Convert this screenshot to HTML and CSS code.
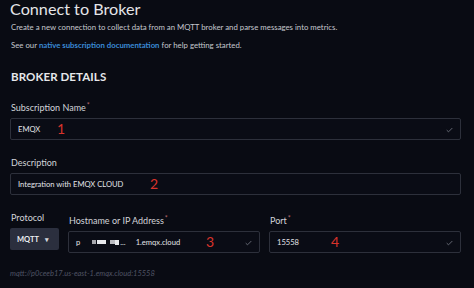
FILE: index.html
```html
<!DOCTYPE html>
<html>
<head>
<meta charset="utf-8">
<link rel="stylesheet" href="styles.css">
</head>
<body>
<div class="page">
  <h1 class="title">Connect to Broker</h1>
  <p class="intro">Create a new connection to collect data from an MQTT broker and parse messages into metrics.</p>
  <p class="intro second">See our <a class="link">native subscription documentation</a> for help getting started.</p>
  <h2 class="section">BROKER DETAILS</h2>

  <div class="field">
    <div class="label">Subscription Name<span class="req">*</span></div>
    <div class="input">
      <span class="value">EMQX</span>
      <span class="num n1">1</span>
      <svg class="check" viewBox="0 0 10 8"><path d="M1 4.2 L3.6 6.6 L9 1.2" fill="none" stroke="currentColor" stroke-width="1.3"/></svg>
    </div>
  </div>

  <div class="field">
    <div class="label">Description</div>
    <div class="input">
      <span class="value">Integration with EMQX CLOUD</span>
      <span class="num n2">2</span>
    </div>
  </div>

  <div class="row">
    <div class="col proto">
      <div class="label">Protocol</div>
      <div class="select"><span>MQTT</span><span class="caret">▾</span></div>
    </div>
    <div class="col wide">
      <div class="label">Hostname or IP Address<span class="req">*</span></div>
      <div class="input">
        <span class="value host">p<span class="blk b1"></span><span class="blk b2"></span><span class="blk b3"></span><span class="blk b4"></span><span class="dots">...</span>1.emqx.cloud</span>
        <span class="num n3">3</span>
        <svg class="check" viewBox="0 0 10 8"><path d="M1 4.2 L3.6 6.6 L9 1.2" fill="none" stroke="currentColor" stroke-width="1.3"/></svg>
      </div>
    </div>
    <div class="col wide">
      <div class="label">Port<span class="req">*</span></div>
      <div class="input">
        <span class="value">15558</span>
        <span class="num n4">4</span>
        <svg class="check" viewBox="0 0 10 8"><path d="M1 4.2 L3.6 6.6 L9 1.2" fill="none" stroke="currentColor" stroke-width="1.3"/></svg>
      </div>
    </div>
  </div>

  <div class="url">mqtt://p0ceeb17.us-east-1.emqx.cloud:15558</div>
</div>
</body>
</html>
```

FILE: styles.css
```css
html, body {
  margin: 0;
  padding: 0;
  background: #090b13;
}
body {
  width: 474px;
  height: 288px;
  overflow: hidden;
  font-family: "Lato", "Open Sans", sans-serif;
  color: #d9dbe0;
}
.page {
  padding: 0 13px 0 10px;
}
.title {
  margin: 0;
  font-size: 16.2px;
  line-height: 17px;
  font-weight: 400;
  color: #e4e5e8;
}
.intro {
  margin: 4px 0 0 1px;
  font-size: 7.8px;
  line-height: 12px;
  color: #c6c8ce;
}
.intro.second {
  margin-top: 6px;
}
.link {
  color: #3a8ad6;
  font-weight: 700;
}
.section {
  margin: 19px 0 0 1px;
  font-size: 11.5px;
  line-height: 14px;
  font-weight: 700;
  color: #e6e7ea;
  letter-spacing: 0.1px;
}
.field {
  margin-top: 15px;
}
.field + .field {
  margin-top: 17px;
}
.label {
  font-size: 9px;
  line-height: 12px;
  color: #d2d4d9;
  margin: 0 0 4px 1px;
  white-space: nowrap;
}
.req {
  color: #b86a6a;
  font-size: 7px;
  vertical-align: 3px;
  margin-left: 1px;
}
.input {
  position: relative;
  box-sizing: border-box;
  height: 22px;
  border: 1px solid #2d303b;
  border-radius: 2px;
  background: #0a0c15;
  display: flex;
  align-items: center;
  padding: 0 7px;
}
.value {
  font-size: 7.6px;
  color: #e3e4e8;
  white-space: nowrap;
}
.num {
  position: absolute;
  top: 2px;
  font-size: 14px;
  line-height: 16px;
  color: #d8332b;
}
.n1 { left: 46px; }
.n2 { left: 139px; }
.n3 { left: 137px; }
.n4 { left: 61px; }
.check {
  position: absolute;
  right: 7px;
  top: 8px;
  width: 7px;
  height: 6px;
  color: #6d717c;
}
.row {
  display: flex;
  gap: 9px;
  margin-top: 17px;
}
.col.proto {
  width: 49px;
  flex: none;
}
.col.wide {
  flex: 1;
}
.select {
  box-sizing: border-box;
  height: 22px;
  background: #2b2f3e;
  border-radius: 2px;
  display: flex;
  align-items: center;
  padding-left: 7px;
  gap: 6px;
  font-size: 7.5px;
  font-weight: 700;
  color: #eceef2;
}
.caret {
  font-size: 7px;
  color: #d5d7dc;
}
.host {
  display: flex;
  align-items: center;
}
.blk {
  display: inline-block;
  height: 4px;
  background: #e8e9ec;
  filter: blur(0.6px);
}
.b1 { width: 4px; margin-left: 12px; opacity: 0.7; }
.b2 { width: 9px; margin-left: 1px; }
.b3 { width: 5px; margin-left: 4px; opacity: 0.8; }
.b4 { width: 4px; margin-left: 0; height: 5px; }
.dots {
  margin: 0 10px 0 1px;
}
.url {
  margin: 16px 0 0 0;
  font-size: 7.5px;
  font-style: italic;
  color: #4f5363;
}
```
